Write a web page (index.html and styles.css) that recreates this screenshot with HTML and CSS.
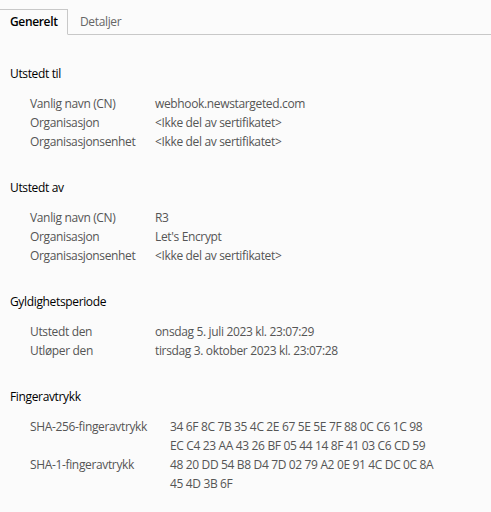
FILE: index.html
```html
<!DOCTYPE html>
<html lang="no">
<head>
<meta charset="utf-8">
<link rel="stylesheet" href="styles.css">
</head>
<body>
<div class="tabs">
  <div class="tab active">Generelt</div>
  <div class="tab">Detaljer</div>
</div>
<div class="content">
  <section class="section">
    <h2 class="heading">Utstedt til</h2>
    <div class="rows">
      <div class="label">Vanlig navn (CN)</div><div class="value">webhook.newstargeted.com</div>
      <div class="label">Organisasjon</div><div class="value">&lt;Ikke del av sertifikatet&gt;</div>
      <div class="label">Organisasjonsenhet</div><div class="value">&lt;Ikke del av sertifikatet&gt;</div>
    </div>
  </section>
  <section class="section">
    <h2 class="heading">Utstedt av</h2>
    <div class="rows">
      <div class="label">Vanlig navn (CN)</div><div class="value">R3</div>
      <div class="label">Organisasjon</div><div class="value">Let's Encrypt</div>
      <div class="label">Organisasjonsenhet</div><div class="value">&lt;Ikke del av sertifikatet&gt;</div>
    </div>
  </section>
  <section class="section">
    <h2 class="heading">Gyldighetsperiode</h2>
    <div class="rows">
      <div class="label">Utstedt den</div><div class="value">onsdag 5. juli 2023 kl. 23:07:29</div>
      <div class="label">Utløper den</div><div class="value">tirsdag 3. oktober 2023 kl. 23:07:28</div>
    </div>
  </section>
  <section class="section">
    <h2 class="heading">Fingeravtrykk</h2>
    <div class="rows wide">
      <div class="label">SHA-256-fingeravtrykk</div><div class="value">34 6F 8C 7B 35 4C 2E 67 5E 5E 7F 88 0C C6 1C 98<br>EC C4 23 AA 43 26 BF 05 44 14 8F 41 03 C6 CD 59</div>
      <div class="label">SHA-1-fingeravtrykk</div><div class="value">48 20 DD 54 B8 D4 7D 02 79 A2 0E 91 4C DC 0C 8A<br>45 4D 3B 6F</div>
    </div>
  </section>
</div>
</body>
</html>
```
FILE: styles.css
```css
html, body {
  margin: 0;
  padding: 0;
  background: #fbfbfb;
}
body {
  font-family: "Open Sans", "Noto Sans", sans-serif;
  font-size: 12px;
  line-height: 19px;
  letter-spacing: -0.35px;
  color: #000;
}
.tabs {
  display: flex;
  padding-top: 9px;
  border-bottom: 1px solid #c8c8c8;
  height: 25px;
}
.tab {
  box-sizing: border-box;
  height: 25px;
  padding: 2px 0 0 12px;
  line-height: 21px;
  color: #666;
}
.tab.active {
  width: 68px;
  padding-left: 10px;
  border-top: 1px solid #c8c8c8;
  border-right: 1px solid #c8c8c8;
  border-bottom: 1px solid #fbfbfb;
  height: 26px;
  padding-top: 1px;
  font-weight: 600;
  color: #000;
}
.content {
  padding: 29px 0 0 10px;
  display: flex;
  flex-direction: column;
  gap: 27px;
}
.heading {
  margin: 0 0 11px 0;
  font-size: 12px;
  font-weight: 400;
  line-height: 19px;
}
.rows {
  display: grid;
  grid-template-columns: 125px 1fr;
  padding-left: 20px;
  color: #555;
}
.rows.wide {
  grid-template-columns: 140px 1fr;
}
```
